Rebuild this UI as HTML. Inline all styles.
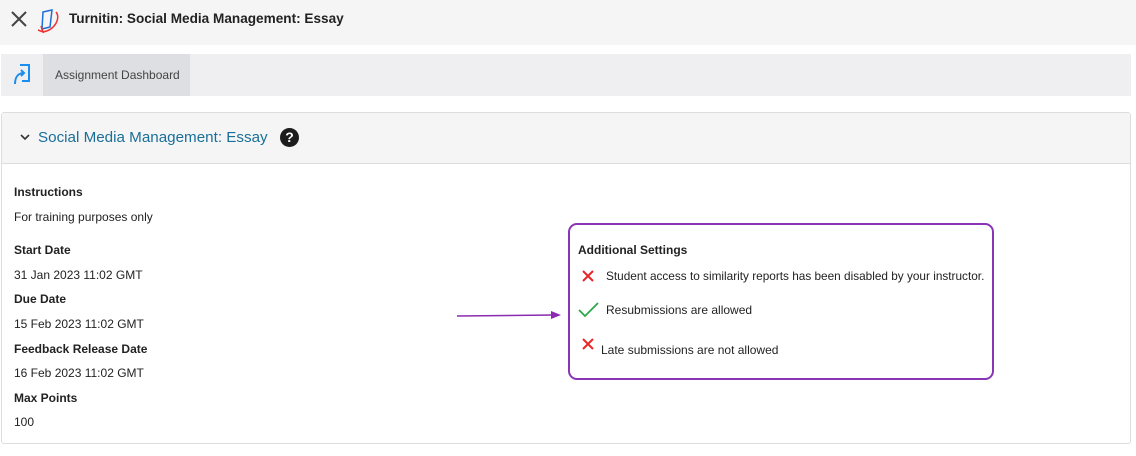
<!DOCTYPE html>
<html><head><style>
body{margin:0;width:1136px;height:456px;background:#fff;font-family:"Liberation Sans",sans-serif;position:relative;overflow:hidden;color:#222}
.a{position:absolute;white-space:nowrap}
.lbl{font-size:12px;font-weight:bold;color:#222}
.val{font-size:12px;color:#222}
</style></head><body>
<div class="a" style="left:0;top:0;width:1136px;height:45px;background:#f5f5f5"></div>
<svg class="a" style="left:10px;top:10px" width="18" height="18"><path d="M2 2L16 16M16 2L2 16" stroke="#444" stroke-width="2"/></svg>
<svg class="a" style="left:37px;top:8px" width="24" height="26"><path d="M6 4L15 2L13 19L5 21Z" fill="none" stroke="#1e6fd9" stroke-width="1.5"/><path d="M19 4C24 10 18 22 6 24" fill="none" stroke="#e33" stroke-width="1.5"/><path d="M4 18L6 24L1 22" fill="none" stroke="#e33" stroke-width="1.5"/></svg>
<div class="a" style="left:69px;top:11px;font-size:13.6px;font-weight:bold;color:#222">Turnitin: Social Media Management: Essay</div>
<div class="a" style="left:1px;top:54px;width:1130px;height:42px;background:#efeff1"></div>
<div class="a" style="left:43px;top:54px;width:147px;height:42px;background:#dedfe2"></div>
<svg class="a" style="left:12px;top:62px" width="20" height="26"><path d="M8 3H17V19H10" fill="none" stroke="#1a8ef0" stroke-width="2"/><path d="M3 22C3 14 7 11 12 11M9 8L12 11L9 14" fill="none" stroke="#1a8ef0" stroke-width="2"/></svg>
<div class="a" style="left:55px;top:68px;font-size:12px;color:#444">Assignment Dashboard</div>
<div class="a" style="left:1px;top:112px;width:1128px;height:330px;border:1px solid #ddd;border-radius:3px"></div>
<div class="a" style="left:2px;top:113px;width:1128px;height:50px;background:#f5f5f5;border-bottom:1px solid #ddd"></div>
<svg class="a" style="left:20px;top:133px" width="10" height="8"><path d="M1 2L5 6L9 2" fill="none" stroke="#333" stroke-width="1.6"/></svg>
<div class="a" style="left:38px;top:129px;font-size:15.2px;color:#1a6f9a">Social Media Management: Essay</div>
<div class="a" style="left:280px;top:128px;width:19px;height:19px;border-radius:50%;background:#1d1d1d;color:#fff;font-size:14px;font-weight:bold;text-align:center;line-height:19px">?</div>
<div class="a lbl" style="left:14px;top:185px">Instructions</div>
<div class="a val" style="left:14px;top:210px">For training purposes only</div>
<div class="a lbl" style="left:14px;top:243px">Start Date</div>
<div class="a val" style="left:14px;top:268px">31 Jan 2023 11:02 GMT</div>
<div class="a lbl" style="left:14px;top:292px">Due Date</div>
<div class="a val" style="left:14px;top:317px">15 Feb 2023 11:02 GMT</div>
<div class="a lbl" style="left:14px;top:342px">Feedback Release Date</div>
<div class="a val" style="left:14px;top:366px">16 Feb 2023 11:02 GMT</div>
<div class="a lbl" style="left:14px;top:391px">Max Points</div>
<div class="a val" style="left:14px;top:415px">100</div>
<svg class="a" style="left:455px;top:308px" width="110" height="14"><path d="M2 8L100 7" stroke="#8a2bb0" stroke-width="1.5"/><path d="M96 3L106 7L96 11Z" fill="#8a2bb0"/></svg>
<div class="a" style="left:568px;top:223px;width:422px;height:153px;border:2px solid #8a35b5;border-radius:9px"></div>
<div class="a lbl" style="left:578px;top:243px">Additional Settings</div>
<svg class="a" style="left:582px;top:270px" width="12" height="12"><path d="M1 1L11 11M11 1L1 11" stroke="#e82727" stroke-width="2"/></svg>
<div class="a val" style="left:606px;top:269px;font-size:11.8px">Student access to similarity reports has been disabled by your instructor.</div>
<svg class="a" style="left:578px;top:302px" width="22" height="16"><path d="M1 8L7 14L20 1" fill="none" stroke="#2aa84a" stroke-width="1.8"/></svg>
<div class="a val" style="left:606px;top:303px">Resubmissions are allowed</div>
<svg class="a" style="left:582px;top:338px" width="12" height="12"><path d="M1 1L11 11M11 1L1 11" stroke="#e82727" stroke-width="2"/></svg>
<div class="a val" style="left:601px;top:343px">Late submissions are not allowed</div>
</body></html>
